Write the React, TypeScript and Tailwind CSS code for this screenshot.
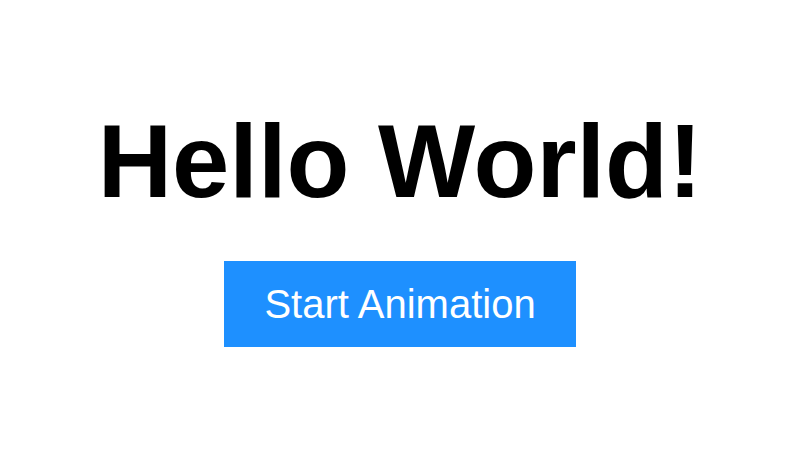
import React, { useState } from "react";

const App: React.FC = () => {
  const [running, setRunning] = useState(false);

  return (
    <div className="h-[450px] w-full bg-white flex flex-col items-center justify-center gap-10 font-['Liberation_Sans',Arial,sans-serif]">
      <h1 className="text-[103px] leading-[normal] font-bold text-black">Hello World!</h1>
      <button
        type="button"
        onClick={() => setRunning(!running)}
        className="bg-[#1e90ff] text-white text-[40px] leading-[normal] px-10 py-[20.5px]"
      >
        Start Animation
      </button>
    </div>
  );
};

export default App;
